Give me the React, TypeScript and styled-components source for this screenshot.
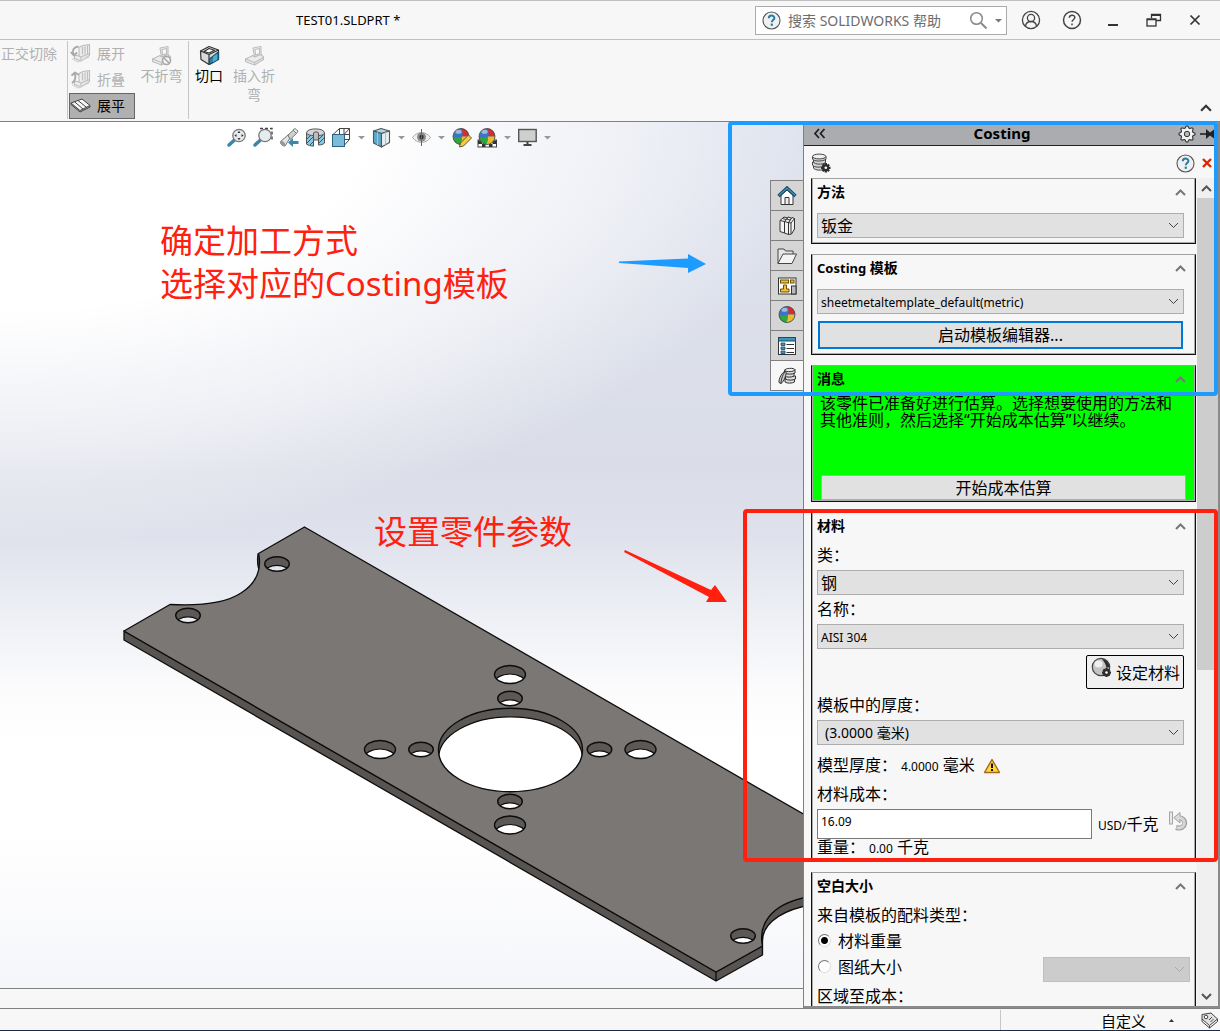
import React, { useState } from "react";
import styled, { createGlobalStyle, css } from "styled-components";

const sans = `"Noto Sans", "Noto Sans CJK SC", sans-serif`;

const GlobalStyle = createGlobalStyle`
  * { box-sizing: border-box; }
  html, body { margin: 0; }
  body { font-family: ${sans}; font-size: 16px; color: #000; background: #f7f7f7; }
  button, input, select { font-family: inherit; margin: 0; }
  svg { display: block; flex: none; }
`;

/* ---------- layout ---------- */

const Page = styled.div`
  position: relative;
  display: flex;
  flex-direction: column;
  height: 100vh;
  min-width: 900px;
  overflow: hidden;
  border-bottom: 1px solid #1d2a44;
`;

const TitleBar = styled.header`
  display: flex;
  align-items: center;
  height: 40px;
  flex: none;
  border-top: 1px solid #c0c0c0;
  border-bottom: 1px solid #c0c0c0;
  padding: 0 5px 0 296px;
`;

const DocTitle = styled.h1`
  margin: 0;
  flex: 1;
  font-size: 13px;
  font-weight: 400;
`;

const SearchBox = styled.label`
  display: flex;
  align-items: center;
  width: 252px;
  height: 29px;
  margin-right: 3px;
  padding: 0 4px 0 6px;
  gap: 7px;
  border: 1px solid #ababab;
  background: #fff;
`;

const SearchInput = styled.input`
  flex: 1;
  min-width: 0;
  border: 0;
  padding: 0;
  font-size: 14px;
  background: none;
  outline: none;
  &::placeholder { color: #6d6d6d; opacity: 1; }
`;

const PlainButton = styled.button`
  display: flex;
  align-items: center;
  justify-content: center;
  border: 0;
  padding: 0;
  background: none;
`;

const WindowButton = styled(PlainButton)`
  width: 41px;
  height: 36px;
`;

const Ribbon = styled.nav`
  display: flex;
  align-items: flex-start;
  height: 82px;
  flex: none;
  padding-top: 1px;
  border-bottom: 1px solid #808080;
`;

const RibbonGroup = styled.div`
  display: flex;
  height: 78px;
  border-right: 1px solid #c6c6c6;
  &:last-of-type { border-right: 0; }
`;

const RibbonStack = styled.div`
  display: flex;
  flex-direction: column;
  padding-left: 1px;
`;

const RibbonButton = styled.button<{ $pressed?: boolean }>`
  display: flex;
  align-items: center;
  gap: 6px;
  height: 26px;
  padding: 0 9px 2px 0;
  border: 1px solid ${(p) => (p.$pressed ? "#666" : "transparent")};
  background: ${(p) => (p.$pressed ? "#b0b0b0" : "none")};
  color: ${(p) => (p.$pressed ? "#000" : "#b0b0b0")};
  font-size: 14px;
`;

const RibbonTile = styled.button<{ $enabled?: boolean; $width: number }>`
  display: flex;
  flex-direction: column;
  align-items: center;
  width: ${(p) => p.$width}px;
  padding: 4px 0 0;
  border: 0;
  background: none;
  color: ${(p) => (p.$enabled ? "#000" : "#b0b0b0")};
  font-size: 14px;
  line-height: 19px;
`;

const RibbonCollapse = styled(PlainButton)`
  align-self: flex-end;
  margin-left: auto;
  width: 28px;
  height: 26px;
`;

const Main = styled.main`
  display: flex;
  flex: 1;
  min-height: 0;
`;

const ViewColumn = styled.section`
  display: flex;
  flex-direction: column;
  flex: 1;
  min-width: 0;
`;

const Viewport = styled.div`
  position: relative;
  flex: 1;
  overflow: hidden;
  background:
    radial-gradient(870px 450px at 0 0, #fff 0, #fff 42%, rgba(255, 255, 255, 0.5) 72%, rgba(255, 255, 255, 0) 94%),
    linear-gradient(#dfe3ee 0, #dadde8 40%, #dfe2ec 48%, #eff1f6 58%, #fcfcfd 66%, #fff 72%, #fff 82%, #f5f6fa 100%);
`;

const ViewFooter = styled.div`
  height: 20px;
  flex: none;
  border-top: 1px solid #808080;
`;

const HudBar = styled.div`
  position: relative;
  z-index: 1;
  display: flex;
  padding: 2px 0 0 224px;
`;

const HudButton = styled(PlainButton)<{ $menu?: boolean }>`
  width: ${(p) => (p.$menu ? 14 : 26)}px;
  height: 26px;
`;

const ModelDrawing = styled.svg`
  position: absolute;
  left: 0;
  top: 0;
`;

const TabStrip = styled.div`
  position: absolute;
  right: 0;
  top: 58px;
  width: 33px;
  border: 1px solid #808080;
  border-width: 1px 0 0 1px;
`;

const TabButton = styled(PlainButton)<{ $active?: boolean }>`
  width: 32px;
  height: 30px;
  background: ${(p) => (p.$active ? "#f7f7f7" : "#d5d5d5")};
  border-bottom: 1px solid #808080;
`;

/* ---------- task pane ---------- */

const TaskPane = styled.aside`
  display: flex;
  flex-direction: column;
  flex: none;
  width: 417px;
  border-left: 1px solid #808080;
  border-right: 2px solid #8a8a8a;
`;

const PaneHeader = styled.header`
  display: flex;
  align-items: center;
  height: 24px;
  flex: none;
  padding: 0 1px 0 9px;
  gap: 3px;
  background: #abacaf;
  border-bottom: 1px solid #222;
`;

const PaneTitle = styled.h2`
  flex: 1;
  margin: 0;
  text-align: center;
  font-size: 15px;
  font-weight: 700;
  line-height: 22px;
  padding-bottom: 1px;
`;

const PaneTools = styled.div`
  display: flex;
  align-items: center;
  height: 32px;
  flex: none;
  padding: 2px 5px 0 7px;
  gap: 6px;
`;

const Spacer = styled.span`
  flex: 1;
`;

const PaneBody = styled.div`
  display: flex;
  flex: 1;
  min-height: 0;
  border-bottom: 2px solid #8a8a8a;
`;

const Groups = styled.div`
  flex: 1;
  min-width: 0;
  display: flex;
  flex-direction: column;
  gap: 10px;
  padding: 0 1px 0 7px;
  overflow-y: auto;
  scrollbar-width: none;
`;

const ScrollTrack = styled.div`
  display: flex;
  flex-direction: column;
  width: 21px;
  flex: none;
  background: #f0f0f0;
`;

const ScrollThumb = styled.div`
  height: 57%;
  background: #cdcdcd;
`;

const ScrollButton = styled(PlainButton)`
  height: 20px;
  flex: none;
  padding-right: 3px;
`;

const GroupBox = styled.section<{ $alert?: boolean }>`
  flex: none;
  border: 1px solid #111;
  border-top-color: #a0a0a0;
  box-shadow: inset 1px 0 #aaa, inset -1px -1px #aaa;
  padding: 0 11px ${(p) => (p.$alert ? 1 : 5)}px 5px;
  background: ${(p) => (p.$alert ? "#00ff00" : "#f7f7f7")};
`;

const GroupHead = styled.div<{ $loose?: boolean }>`
  display: flex;
  align-items: center;
  justify-content: space-between;
  height: 28px;
  padding-bottom: 2px;
  margin: 0 -2px ${(p) => (p.$loose ? 6 : 0)}px 0;
`;

const GroupTitle = styled.h3`
  margin: 0;
  font-size: 14px;
  font-weight: 700;
  line-height: 26px;
`;

const TitleLatin = styled.span`
  font-size: 13px;
`;

const Latin = styled.span`
  font-size: 12px;
`;

const FieldLabel = styled.label`
  display: block;
  height: 29px;
  line-height: 29px;
`;

const SelectWrap = styled.div<{ $muted?: boolean }>`
  display: grid;
  align-items: center;
  width: ${(p) => (p.$muted ? "147px" : "100%")};
  & > * { grid-area: 1 / 1; }
  & > svg { justify-self: end; margin-right: 5px; pointer-events: none; }
`;

const SelectBox = styled.select<{ $size: "small" | "medium" | "large" }>`
  appearance: none;
  width: 100%;
  height: 25px;
  padding: 0 24px 0 3px;
  border: 1px solid #adadad;
  border-radius: 0;
  background: #e1e1e1;
  color: #000;
  font-size: ${(p) => ({ small: 12, medium: 14, large: 16 })[p.$size]}px;
  ${(p) => p.$size === "medium" && css`padding-left: 7px;`}
  ${(p) => p.$size === "small" && css`padding-top: 2px;`}
  &:disabled { background: #ccc; border-color: #bfbfbf; opacity: 1; }
`;

const WideButton = styled.button<{ $focus?: boolean }>`
  display: block;
  width: calc(100% - 2px);
  padding: 0;
  font-size: 16px;
  line-height: 20px;
  background: #e1e1e1;
  ${(p) =>
    p.$focus
      ? css`height: 28px; margin: 7px 1px 0; border: 2px solid #0078d7;`
      : css`height: 25px; margin-left: 4px; border: 1px solid #adadad;`}
`;

const Message = styled.p`
  margin: 0 -1px 0 0;
  min-height: 81px;
  padding: 1px 0 0 3px;
  line-height: 17px;
`;

const MaterialRow = styled.div`
  display: flex;
  justify-content: flex-end;
  padding: 6px 0 2px;
`;

const MaterialButton = styled.button`
  display: flex;
  align-items: center;
  gap: 4px;
  height: 34px;
  padding: 0 3px 0 4px;
  border: 1px solid #000;
  border-radius: 2px;
  background: #f0f0f0;
  font-size: 16px;
  & > svg { align-self: flex-start; margin-top: 1px; }
`;

const ValueRow = styled.div<{ $spaced?: boolean }>`
  display: flex;
  align-items: center;
  gap: 4px;
  height: ${(p) => (p.$spaced ? 35 : 17)}px;
  padding-top: ${(p) => (p.$spaced ? 6 : 0)}px;
  line-height: 17px;
  & output { margin-right: 4px; }
`;

const CostRow = styled.div`
  display: flex;
  align-items: center;
  gap: 6px;
  margin-right: -4px;
`;

const CostInput = styled.input`
  width: 275px;
  height: 30px;
  padding: 0 3px 6px;
  border: 1px solid #7a7a7a;
  background: #fff;
  font-size: 12px;
`;

const Unit = styled.span`
  flex: 1;
  padding-bottom: 3px;
  white-space: nowrap;
`;

const ResetButton = styled(PlainButton)`
  padding-bottom: 6px;
`;

const RadioRow = styled.div<{ $tall?: boolean }>`
  display: flex;
  align-items: flex-end;
  justify-content: space-between;
  height: ${(p) => (p.$tall ? 32 : 20)}px;
  margin-right: -6px;
`;

const RadioLabel = styled.label<{ $tall?: boolean }>`
  display: flex;
  align-items: center;
  gap: 7px;
  height: ${(p) => (p.$tall ? 32 : 20)}px;
`;

const Radio = styled.input`
  appearance: none;
  width: 13px;
  height: 13px;
  margin: 0 0 0 1px;
  border: 1px solid;
  border-color: #777 #ddd #ddd #777;
  border-radius: 50%;
  background: #fff;
  &:checked { background: radial-gradient(circle, #000 0 3px, #fff 4px); }
`;

const StatusBar = styled.footer`
  display: flex;
  justify-content: flex-end;
  height: 22px;
  flex: none;
  border-top: 1px solid #808080;
`;

const StatusCell = styled.div`
  display: flex;
  align-items: center;
  justify-content: flex-end;
  gap: 25px;
  width: 220px;
  margin-top: 1px;
  padding: 1px 1px 0 0;
  border-left: 1px solid #c6c6c6;
`;

const UnitMenu = styled(PlainButton)`
  gap: 22px;
  font-size: 15px;
`;

/* ---------- markup drawn over the window ---------- */

const Callout = styled.div<{ $color: string; $top: number; $width: number; $height: number }>`
  position: absolute;
  right: 2px;
  top: ${(p) => p.$top}px;
  width: ${(p) => p.$width}px;
  height: ${(p) => p.$height}px;
  border: 4px solid ${(p) => p.$color};
  border-radius: 4px;
  pointer-events: none;
`;

const Note = styled.p<{ $left: number; $top: number }>`
  position: absolute;
  left: ${(p) => p.$left}px;
  top: ${(p) => p.$top}px;
  margin: 0;
  color: #ff2010;
  font-size: 33px;
  font-weight: 400;
  line-height: 43px;
  white-space: nowrap;
`;

/* ---------- icons ---------- */

const Chevron = ({ up, color = "#555", size = 11, weight = 1 }: { up?: boolean; color?: string; size?: number; weight?: number }) => (
  <svg width={size} height={size} viewBox="0 0 11 11" fill="none" stroke={color} strokeWidth={weight}>
    <path d={up ? "M1 8 5.500 3.500 10 8" : "M1 3 5.500 7.500 10 3"} />
  </svg>
);

const Caret = ({ up, color = "#777" }: { up?: boolean; color?: string }) => (
  <svg width="7" height="5" viewBox="0 0 7 5">
    <path d={up ? "M1 4h5L3.500 1z" : "M0 1h7L3.500 4.500z"} fill={color} />
  </svg>
);

const HelpBadge = () => (
  <svg width="19" height="19" viewBox="0 0 19 19">
    <circle cx="9.500" cy="9.500" r="8.500" fill="#eef0f2" stroke="#555" strokeWidth="1.100" />
    <path d="M6.800 7.300c0-3.600 5.600-3.500 5.600-.3 0 2-2.600 2.200-2.600 4.200" fill="none" stroke="#2a7ca3" strokeWidth="2" />
    <rect x="8.700" y="12.600" width="2.200" height="2.200" fill="#2a7ca3" />
  </svg>
);

const Gear = ({ x, y, r, fill = "#2d2d2d", hole = "#fff" }: { x: number; y: number; r: number; fill?: string; hole?: string }) => (
  <g transform={`translate(${x} ${y})`}>
    <g stroke={fill} strokeWidth={r * 0.5}>
      <path d={`M0 ${-r}V${r}M${-r} 0H${r}M${-r * 0.7} ${-r * 0.7}L${r * 0.7} ${r * 0.7}M${r * 0.7} ${-r * 0.7}L${-r * 0.7} ${r * 0.7}`} />
    </g>
    <circle r={r * 0.72} fill={fill} />
    <circle r={r * 0.28} fill={hole} />
  </g>
);

const CoinStack = () => (
  <svg width="20" height="20" viewBox="0 0 20 20">
    <g fill="#d4d4d4" stroke="#444" strokeWidth="1">
      <path d="M2.500 12.500V15c1 2.500 9 3 12 .5v-3z" />
      <path d="M1.500 9V12c1 2.500 9 3 12.500.5V9z" />
      <path d="M2.500 6V9c1 2.500 9 3 12 .5V6z" />
      <path d="M1.500 3.500V6c1 2.500 9.500 2.800 13.500 .3V3.500z" />
      <ellipse cx="8.200" cy="3.500" rx="6.700" ry="2.400" fill="#f0f0f0" />
    </g>
    <Gear x={14.800} y={14.800} r={4.700} />
  </svg>
);

const GearOutline = () => {
  const teeth = Array.from({ length: 32 }, (_, i) => {
    const radius = i % 4 < 2 ? 8 : 6.200;
    const angle = ((i - 0.500) * Math.PI) / 16;
    return `${(9 + radius * Math.cos(angle)).toFixed(2)},${(9 + radius * Math.sin(angle)).toFixed(2)}`;
  });
  return (
    <svg width="18" height="18" viewBox="0 0 18 18">
      <polygon points={teeth.join(" ")} fill="#f2f2f2" stroke="#333" strokeWidth="1.100" strokeLinejoin="round" />
      <circle cx="9" cy="9" r="2.700" fill="#bbb" stroke="#333" />
    </svg>
  );
};

const PinIcon = () => (
  <svg width="18" height="12" viewBox="0 0 18 12">
    <path d="M1 6h7" stroke="#222" strokeWidth="1.600" />
    <path d="M7 1v10l4-3.500 4 3V1.500l-4 3z" fill="#222" />
  </svg>
);

const DoubleChevron = () => (
  <svg width="13" height="11" viewBox="0 0 13 11" fill="none" stroke="#222" strokeWidth="1.800">
    <path d="M6 1 2 5.500 6 10M11.500 1l-4 4.500 4 4.500" />
  </svg>
);

const BendPart = ({ mark }: { mark?: "arc" | "arrow" | "ban" }) => (
  <svg width="21" height="21" viewBox="0 0 21 21" fill="#ececec" stroke="#bdbdbd" strokeWidth="1.100" strokeLinejoin="round">
    {mark === "arc" || mark === "arrow" ? (
      <g>
        <path d="M9 4.500 13 2.500l6.500-1v11L11 18 4.500 15.500V12L9 13z" />
        <path d="M12.500 4v7.500M15 3.200v8M17.500 2.500v8.500M9 13l2 1 8.500-3.500M11 14v4" fill="none" />
        <path d="M2 15.500 8 19l11-5" fill="none" stroke="#d2d2d2" />
        {mark === "arc" ? (
          <path d="M8.500 3.500C3.500 4 2 7 3.500 11.500M.800 9l3 3.500L7 9.500" fill="none" stroke="#a8a8a8" strokeWidth="1.900" />
        ) : (
          <path d="M2 14c3-2 4-5 3-9M1.500 6.500 5 3.500l4 2.500" fill="none" stroke="#a8a8a8" strokeWidth="1.900" />
        )}
      </g>
    ) : (
      <g>
        <path d="M9 3 17 1.500V9.500L10.500 12z" />
        <path d="m11 4.500 4.500-1v5L11.500 10z" fill="#fafafa" />
        <path d="M1.500 14 9 10.500l1.500 1.500 6.500-2.500 2.500 2.500v2.500L10.500 20l-9-3.500z" />
        <path d="m1.500 14 9 3.500 9-5M10.500 17.500V20" fill="none" />
      </g>
    )}
    {mark === "ban" && (
      <g stroke="#a8a8a8" fill="#f4f4f4">
        <circle cx="15.500" cy="15.500" r="4" strokeWidth="1.600" />
        <path d="m13 13 5 5" strokeWidth="1.600" />
      </g>
    )}
  </svg>
);

const FlattenIcon = () => (
  <svg width="21" height="16" viewBox="0 0 21 16" fill="#f7f7f7" stroke="#444" strokeWidth="1">
    <path d="M1 6 12 2l8 6.500-10 5z" />
    <path d="m4.500 4.800 8.700 7.400M8 3.500l8.700 7M1 6v1.500l9 7.500 10-5V8.500" fill="none" />
  </svg>
);

const RipIcon = () => (
  <svg width="21" height="21" viewBox="0 0 21 21" stroke="#333" strokeWidth="1.200" strokeLinejoin="round">
    <path d="M1.500 6 10 1.500 19.500 5v9L10 19.500l-8-5z" fill="#d9d9d9" />
    <path d="M1.500 6 10 9.500 19.500 5M10 9.500v10" fill="none" />
    <path d="M5 6.500 10 3.500l5.500 1.800L10 8z" fill="#fff" />
    <path d="M10.500 18.500V14L19.500 7v7.500l-8 4.500z" fill="#2d83ad" stroke="#15506e" />
    <path d="M14 11.500 18 9v6l-4 2z" fill="#57a9cf" stroke="none" />
  </svg>
);

const Lens = ({ area }: { area?: boolean }) => (
  <svg width="21" height="21" viewBox="0 0 21 21">
    {area && <path d="M7 1.500h12v12" fill="none" stroke="#444" strokeWidth="1.400" strokeDasharray="3 2" />}
    <path d="m2 18 6-5.500" stroke="#3b87ab" strokeWidth="3.500" strokeLinecap="round" />
    <circle cx="12" cy="8.500" r="6.200" fill="#e6ebee" stroke="#777" strokeWidth="1.300" />
    {!area && <path d="M12 3.800 13.500 6h-3zM12 13.200l1.500-2.200h-3zM7.300 8.500 9.500 7v3zM16.700 8.500 14.500 7v3z" fill="#333" />}
  </svg>
);

const PreviousView = () => (
  <svg width="21" height="21" viewBox="0 0 21 21" strokeLinejoin="round">
    <path d="M1.500 14.500 9 8l2 3-5 8c-2 .5-5-2-4.500-4.500z" fill="#e4e4e4" stroke="#777" />
    <path d="M9 8l5.500-5 3 3.500L11 12.500z" fill="#d0d0d0" stroke="#777" />
    <path d="M14 3l2-1.500 3 2.500-1.500 2.500z" fill="#eee" stroke="#777" />
    <ellipse cx="3.800" cy="16.500" rx="1.800" ry="2.800" transform="rotate(-45 3.800 16.500)" fill="#999" />
    <path d="M9 15.500l5-4.500v3h5.500v3H14v3z" fill="#3b87ab" />
  </svg>
);

const SectionView = () => (
  <svg width="21" height="21" viewBox="0 0 21 21" stroke="#555" strokeLinejoin="round">
    <path d="M1.500 6c0-5.500 18-5.500 18 0v10l-5 1.500V9h-6v10l-7-2z" fill="#d5d5d5" />
    <path d="M8.500 6c0-1.500 5-1.500 5 0v7h-5z" fill="#bdbdbd" />
    <path d="M1.500 6.500c2 1.500 4 2 7 2V19c-3 0-5-.5-7-2z" fill="#8cc6de" />
    <path d="M13.500 8.500c2.500 0 4.500-.5 6-2V16c-1.500 1.500-3.500 2-6 2z" fill="#8cc6de" />
    <path d="m2 12 4-4M2 16l6-6M5 18l3.500-3.500M14 12l4-4M14 16l5.500-5.500" stroke="#1f5f80" />
  </svg>
);

const OrientationCube = () => (
  <svg width="21" height="21" viewBox="0 0 21 21" stroke="#444">
    <path d="M2 7.500 8.500 1.500h10v11L13 18.500M8.500 1.500v6M13 7.500l5.500-6M13 2v12M8.500 12.500h10M13 7.500h5" fill="none" />
    <rect x="1.500" y="7.500" width="12" height="12" fill="#7dbcd8" stroke="#2d6380" />
  </svg>
);

const DisplayCube = () => (
  <svg width="21" height="21" viewBox="0 0 21 21" stroke="#555" strokeWidth="1.100" strokeLinejoin="round">
    <path d="M2.500 4 10 1.500 18.500 4 10.500 6.500z" fill="#a9d6ea" />
    <path d="M2.500 4v12l8 4V6.500z" fill="#5ea7c8" />
    <path d="M10.500 6.500V20l8-4.500V4z" fill="#e8eef1" />
    <path d="M6.500 5.200V18M14.500 5.200v12.500" stroke="#9cc" />
  </svg>
);

const EyeIcon = () => (
  <svg width="21" height="21" viewBox="0 0 21 21">
    <path d="M1.500 10.500C6 4 15 4 19.500 10.500 15 17 6 17 1.500 10.500z" fill="#eee" stroke="#aaa" />
    <circle cx="10.500" cy="10" r="4.500" fill="#8b8b8b" />
    <circle cx="10.500" cy="10" r="2.200" fill="#333" />
    <path d="M10.500 2v17" stroke="#666" />
  </svg>
);

const ColourBall = ({ extra }: { extra?: "pencil" | "scene" }) => (
  <svg width="21" height="21" viewBox="0 0 21 21">
    {extra === "scene" && (
      <g>
        <rect x="1" y="13" width="18.500" height="7" fill="#fff" stroke="#444" />
        <path d="M1 13.500h4V17H1zM5 17h3.500v3H5zM8.500 14H12v3H8.500zM12 17h3.500v3H12zM15.500 13.500h4V17h-4z" fill="#333" />
      </g>
    )}
    <circle cx="10" cy="9.500" r="8" fill="#3c74c9" />
    <path d="M10 1.500a8 8 0 0 1 8 8H11c1.500-3 .5-6-1-8z" fill="#d92c2c" />
    <path d="M2 10.500c3 1 6 0 9-1 0 4-.5 6-2 8-3.500 0-6.500-3-7-7z" fill="#2fa73a" />
    <path d="M11 9.500h7a8 8 0 0 1-9 8c1.500-2 2-4 2-8z" fill="#e9bd33" />
    <ellipse cx="7.500" cy="4.800" rx="3.200" ry="2" fill="#fff" opacity="0.500" />
    <circle cx="10" cy="9.500" r="8" fill="none" stroke="#444" strokeWidth="0.800" />
    {extra === "pencil" && <path d="M8.500 20l1-4 8-8 3 3-8 8z" fill="#f2cb4d" stroke="#5c4a1d" strokeWidth="0.900" />}
  </svg>
);

const Monitor = () => (
  <svg width="21" height="21" viewBox="0 0 21 21">
    <rect x="1.700" y="2.500" width="17.500" height="12" fill="#cfcfcf" stroke="#555" strokeWidth="1.400" />
    <path d="M10.500 15v3M6.500 18h8" stroke="#444" strokeWidth="2" />
  </svg>
);

const HomeIcon = () => (
  <svg width="20" height="20" viewBox="0 0 20 20">
    <path d="M4 9v9.500h12V9l-6-5z" fill="#fff" stroke="#333" />
    <path d="M1.500 10 10 2l8.500 8" fill="none" stroke="#123f57" strokeWidth="3.200" />
    <path d="M1.800 9.600 10 2.200l8.200 7.400" fill="none" stroke="#3f94bb" strokeWidth="1.300" />
    <path d="M8 18v-6.500h4V18" fill="#eee" stroke="#333" />
  </svg>
);

const LibraryIcon = () => (
  <svg width="20" height="20" viewBox="0 0 20 20" fill="#f2f2f2" stroke="#333" strokeLinejoin="round">
    <path d="M11.500 6.500 15 1.500l2.500 1V13l-3 5-3 .5z" />
    <path d="M7.500 5 11 1l3.500 1-3 4.500v12l-4-1.500z" />
    <path d="M3 4.500 7 1l3.500 1L7.500 5.500V17L3 15.500z" />
    <path d="m3 4.500 4.500 1 3.500 1 3 .5 3.500-4.500M5.500 2.500 9 3.500M9.500 3l3.500 1M14 7v11" fill="none" />
  </svg>
);

const FolderIcon = () => (
  <svg width="22" height="20" viewBox="0 0 22 20" stroke="#444" strokeLinejoin="round">
    <path d="M2 17.500V3h6l1.500 2H17v3.500" fill="#e6e6e6" />
    <path d="M2 17.500 7 8h13.500l-4.500 9.500z" fill="#f4f4f4" />
  </svg>
);

const PaletteIcon = () => (
  <svg width="20" height="20" viewBox="0 0 20 20" stroke="#333">
    <rect x="1.500" y="2" width="17.500" height="16" fill="#fff" />
    <g fill="#f2c230" stroke="#6b4e00">
      <rect x="3.500" y="4" width="8" height="3" />
      <rect x="13.500" y="4" width="3.500" height="3" />
      <path d="M6.500 9h3v4h2.500v3H3.500v-3h3z" />
    </g>
    <rect x="14.500" y="10" width="4.500" height="8" fill="#bbb" />
  </svg>
);

const PropertiesIcon = () => (
  <svg width="20" height="20" viewBox="0 0 20 20">
    <rect x="1.500" y="2" width="17" height="16.500" fill="#fff" stroke="#333" />
    <rect x="1.500" y="1.500" width="17" height="3.500" fill="#3f94bb" stroke="#1d4a60" />
    <path d="M4 7h4v2.500H4zM4 11h4v2.500H4zM4 15h4v2.500H4z" fill="#3f94bb" stroke="#1d4a60" strokeWidth="0.800" />
    <path d="M9.500 8.500H17M9.500 12.500H17M9.500 16.500H17" stroke="#333" />
  </svg>
);

const CostingIcon = () => (
  <svg width="20" height="20" viewBox="0 0 20 20" stroke="#333" fill="#dcdcdc" strokeLinejoin="round">
    <path d="M8 13v3c2 1.500 7 1.500 9.500 0v-3z" />
    <path d="M8.500 10v3c2 1.500 7 1.500 10 0v-3z" />
    <path d="M7.500 7v3c2 1.500 7 1.500 9.500 0V7z" />
    <path d="M7.500 4v3c2 1.500 8 1.500 10.500 0V3.500z" />
    <path d="M7.500 4.500C8 2 17 1.500 18 3.800c-1 2-8.500 2.500-10.500.7z" fill="#f1f1f1" />
    <path d="M2 16.500C1.500 13 5 6 8.500 5c2 1.500-1.500 11-4.500 12.500z" fill="#c9c9c9" />
    <path d="M4 17.500C4 13 6.500 7 8.500 5" fill="none" />
  </svg>
);

const MaterialBall = () => (
  <svg width="21" height="21" viewBox="0 0 21 21">
    <circle cx="10" cy="10" r="8.700" fill="#c4c4c4" stroke="#444" strokeWidth="1.200" />
    <ellipse cx="7.500" cy="7" rx="4" ry="3.500" fill="#f0f0f0" />
    <path d="M11 2c4 .5 7 3.500 7.500 8l-3 1C15 7 13 4.500 11 2z" fill="#2c2c2c" />
    <Gear x={15.500} y={15.500} r={4.500} />
  </svg>
);

const WarningIcon = () => (
  <svg width="18" height="16" viewBox="0 0 18 16">
    <path d="M9 1.500 16.500 14.500h-15z" fill="#ffd83a" stroke="#a8651c" strokeWidth="1.400" strokeLinejoin="round" />
    <path d="M9 5.500v4.500M9 11v2" stroke="#111" strokeWidth="2" />
  </svg>
);

const ResetIcon = () => (
  <svg width="20" height="20" viewBox="0 0 20 20">
    <rect x="1.500" y="1" width="3" height="12" fill="#e8e8e8" stroke="#a5a5a5" />
    <path d="M8 16.500c11 3 11-10 3-9.700" fill="none" stroke="#a0a0a0" strokeWidth="5" />
    <path d="M12 1.500v10.500L5.800 6.700z" fill="#dadada" stroke="#a0a0a0" />
    <path d="M8.500 16.600c10 2.400 10-10 2.500-9.800" fill="none" stroke="#d6d6d6" strokeWidth="3" />
  </svg>
);

const TagIcon = () => (
  <svg width="19" height="17" viewBox="0 0 19 17" fill="#e2e2e2" stroke="#444" strokeLinejoin="round">
    <path d="M2 2.500 11 1l6.500 6-8 6.500L2 7z" />
    <path d="M2 7v2.500L9.500 16l8-6.500V7M9.500 13.500V16" fill="none" />
    <circle cx="6" cy="5" r="1.800" fill="#fff" />
    <path d="m9 8 3-3M10.500 10l3-3" />
  </svg>
);

/* ---------- part model ---------- */

type HoleProps = { id: string; x: number; y: number; rx: number; ry: number; back?: string };

const Hole = ({ id, x, y, rx, ry, back = "#fff" }: HoleProps) => (
  <g>
    <clipPath id={id}>
      <ellipse cx={x} cy={y} rx={rx} ry={ry} />
    </clipPath>
    <ellipse cx={x} cy={y} rx={rx} ry={ry} fill="#5b5855" />
    <ellipse cx={x} cy={y + 8.500} rx={rx} ry={ry} fill={back} stroke="#0d0d0d" strokeWidth="1.200" clipPath={`url(#${id})`} />
    <ellipse cx={x} cy={y} rx={rx} ry={ry} fill="none" stroke="#0d0d0d" strokeWidth="1.400" />
  </g>
);

const smallHoles: [number, number, string?][] = [
  [277, 564, "#e2e5ee"],
  [188, 615.500, "#eceef4"],
  [421, 749.500],
  [510, 698.500],
  [599.500, 749.500],
  [510, 801.500],
  [743, 936],
];
const boltHoles: [number, number][] = [
  [380, 749.500],
  [510, 674.500],
  [640.500, 749.500],
  [510, 825],
];

const PlateModel = () => (
  <ModelDrawing width="803" height="866" viewBox="0 122 803 866" aria-label="Sheet metal plate">
    <g stroke="#0d0d0d" strokeWidth="1.300" strokeLinejoin="round">
      <path d="M124 631 716 972 762.500 946V955L716 981 124 640z" fill="#575451" />
      <path d="M716 972V981" />
      <path d="M762.500 946C758 925 770 905 805 897.500V906C775 913 762 927 762.500 942z" fill="#575451" />
      <path d="M258 554C257 561 258 568 260 572L262 560z" fill="#575451" />
      <path
        d="M304.500 527 805 815V897.500C770 905 758 925 762.500 946L716 972 124 631 170 604.500C200 606 226 603 241 593C257 583 262 568 258.500 553.500z"
        fill="#7b7774"
      />
    </g>
    {smallHoles.map(([x, y, back], i) => (
      <Hole key={i} id={`small${i}`} x={x} y={y} rx={12.300} ry={7.200} back={back} />
    ))}
    {boltHoles.map(([x, y], i) => (
      <Hole key={i} id={`bolt${i}`} x={x} y={y} rx={15.500} ry={9} />
    ))}
    <Hole id="bore" x={510.500} y={750} rx={72} ry={41.700} />
    <path d="M619 261.500 688 258.500V254L706 264 688 273V268L619 263z" fill="#1e9bff" />
    <path d="M625 550 711 590 715 585 727 602 706 602 709 597 624 552z" fill="#ff2010" />
  </ModelDrawing>
);

/* ---------- composed controls ---------- */

type DropDownProps = { id: string; options: string[]; size?: "small" | "medium" | "large"; disabled?: boolean; label?: string };

const DropDown = ({ id, options, size = "large", disabled, label }: DropDownProps) => (
  <SelectWrap $muted={disabled}>
    <SelectBox id={id} $size={size} disabled={disabled} aria-label={label}>
      {options.map((o) => (
        <option key={o}>{o}</option>
      ))}
    </SelectBox>
    <Chevron color={disabled ? "#aaa" : "#444"} />
  </SelectWrap>
);

type GroupProps = { title: React.ReactNode; loose?: boolean; alert?: boolean; children: React.ReactNode };

const Group = ({ title, loose, alert, children }: GroupProps) => (
  <GroupBox $alert={alert}>
    <GroupHead $loose={loose}>
      <GroupTitle>{title}</GroupTitle>
      <PlainButton aria-label="Collapse">
        <Chevron up color="#777" weight={2} />
      </PlainButton>
    </GroupHead>
    {children}
  </GroupBox>
);

const hudItems: { name: string; icon: React.ReactNode; menu?: boolean }[] = [
  { name: "Zoom to Fit", icon: <Lens /> },
  { name: "Zoom to Area", icon: <Lens area /> },
  { name: "Previous View", icon: <PreviousView /> },
  { name: "Section View", icon: <SectionView /> },
  { name: "View Orientation", icon: <OrientationCube />, menu: true },
  { name: "Display Style", icon: <DisplayCube />, menu: true },
  { name: "Hide/Show Items", icon: <EyeIcon />, menu: true },
  { name: "Edit Appearance", icon: <ColourBall extra="pencil" /> },
  { name: "Apply Scene", icon: <ColourBall extra="scene" />, menu: true },
  { name: "View Settings", icon: <Monitor />, menu: true },
];

const tabs = [
  { name: "Resources", icon: <HomeIcon /> },
  { name: "Design Library", icon: <LibraryIcon /> },
  { name: "File Explorer", icon: <FolderIcon /> },
  { name: "View Palette", icon: <PaletteIcon /> },
  { name: "Appearances", icon: <ColourBall /> },
  { name: "Custom Properties", icon: <PropertiesIcon /> },
  { name: "Costing", icon: <CostingIcon /> },
];

export default function App() {
  const [stock, setStock] = useState("weight");
  const [cost, setCost] = useState("16.09");

  return (
    <Page>
      <GlobalStyle />
      <TitleBar>
        <DocTitle>TEST01.SLDPRT *</DocTitle>
        <SearchBox>
          <HelpBadge />
          <SearchInput placeholder="搜索 SOLIDWORKS 帮助" aria-label="搜索" />
          <svg width="19" height="19" viewBox="0 0 19 19" fill="none" stroke="#888" strokeWidth="1.500">
            <circle cx="7.500" cy="7.500" r="5.800" />
            <path d="m12 12 5.500 5.500" strokeWidth="2" />
          </svg>
          <Caret />
        </SearchBox>
        <WindowButton aria-label="User">
          <svg width="20" height="20" viewBox="0 0 20 20" fill="none" stroke="#444" strokeWidth="1.300">
            <circle cx="10" cy="10" r="8.600" />
            <circle cx="10" cy="8" r="3.600" />
            <path d="M4.500 16c.5-3 2.500-4.500 5.500-4.500s5 1.500 5.500 4.500" />
          </svg>
        </WindowButton>
        <WindowButton aria-label="Help">
          <svg width="20" height="20" viewBox="0 0 20 20" fill="none" stroke="#444" strokeWidth="1.500">
            <circle cx="10" cy="10" r="8.500" />
            <path d="M7.300 7.800c0-3.500 5.500-3.400 5.500-.3 0 2-2.700 2-2.700 4.300M10 13.500v1.800" />
          </svg>
        </WindowButton>
        <WindowButton aria-label="Minimize">
          <svg width="12" height="12" viewBox="0 0 12 12">
            <path d="M1 11h10" stroke="#333" strokeWidth="2" />
          </svg>
        </WindowButton>
        <WindowButton aria-label="Restore">
          <svg width="16" height="15" viewBox="0 0 16 15" fill="none" stroke="#333" strokeWidth="1.300">
            <path d="M5.500 5V1.500h9v6H10" />
            <rect x="1" y="6" width="9" height="7" />
            <path d="M5 2.300h10M1 6.500h9" />
          </svg>
        </WindowButton>
        <WindowButton aria-label="Close">
          <svg width="12" height="12" viewBox="0 0 12 12" stroke="#333" strokeWidth="1.700">
            <path d="m1.500 1.500 9 9M10.500 1.500l-9 9" />
          </svg>
        </WindowButton>
      </TitleBar>

      <Ribbon>
        <RibbonGroup>
          <RibbonButton>正交切除</RibbonButton>
        </RibbonGroup>
        <RibbonGroup>
          <RibbonStack>
            <RibbonButton><BendPart mark="arc" />展开</RibbonButton>
            <RibbonButton><BendPart mark="arrow" />折叠</RibbonButton>
            <RibbonButton $pressed><FlattenIcon />展平</RibbonButton>
          </RibbonStack>
          <RibbonTile $width={53}><BendPart mark="ban" />不折弯</RibbonTile>
        </RibbonGroup>
        <RibbonGroup>
          <RibbonTile $width={40} $enabled><RipIcon />切口</RibbonTile>
          <RibbonTile $width={50}><BendPart />插入折<br />弯</RibbonTile>
        </RibbonGroup>
        <RibbonCollapse aria-label="Collapse ribbon">
          <Chevron up color="#333" weight={2} size={12} />
        </RibbonCollapse>
      </Ribbon>

      <Main>
        <ViewColumn>
          <Viewport>
            <PlateModel />
            <HudBar>
              {hudItems.map((item) => (
                <React.Fragment key={item.name}>
                  <HudButton aria-label={item.name}>{item.icon}</HudButton>
                  {item.menu && (
                    <HudButton $menu aria-label={`${item.name} menu`}><Caret color="#999" /></HudButton>
                  )}
                </React.Fragment>
              ))}
            </HudBar>
            <Note $left={160} $top={97}>确定加工方式<br />选择对应的Costing模板</Note>
            <Note $left={374} $top={388}>设置零件参数</Note>
            <TabStrip>
              {tabs.map((tab) => (
                <TabButton key={tab.name} $active={tab.name === "Costing"} aria-label={tab.name}>{tab.icon}</TabButton>
              ))}
            </TabStrip>
          </Viewport>
          <ViewFooter />
        </ViewColumn>

        <TaskPane>
          <PaneHeader>
            <PlainButton aria-label="Collapse pane"><DoubleChevron /></PlainButton>
            <PaneTitle>Costing</PaneTitle>
            <PlainButton aria-label="Options"><GearOutline /></PlainButton>
            <PlainButton aria-label="Pin"><PinIcon /></PlainButton>
          </PaneHeader>
          <PaneTools>
            <PlainButton aria-label="Costing options"><CoinStack /></PlainButton>
            <Spacer />
            <PlainButton aria-label="Help"><HelpBadge /></PlainButton>
            <PlainButton aria-label="Close">
              <svg width="12" height="12" viewBox="0 0 12 12" stroke="#dc2600" strokeWidth="2.400">
                <path d="m2 2 8 8M10 2l-8 8" />
              </svg>
            </PlainButton>
          </PaneTools>
          <PaneBody>
            <Groups>
              <Group title="方法" loose>
                <DropDown id="method" options={["钣金"]} label="方法" />
              </Group>

              <Group title={<><TitleLatin>Costing</TitleLatin> 模板</>} loose>
                <DropDown id="template" size="small" options={["sheetmetaltemplate_default(metric)"]} label="Costing 模板" />
                <WideButton $focus>启动模板编辑器...</WideButton>
              </Group>

              <Group title="消息" alert>
                <Message>该零件已准备好进行估算。选择想要使用的方法和其他准则，然后选择“开始成本估算”以继续。</Message>
                <WideButton>开始成本估算</WideButton>
              </Group>

              <Group title="材料">
                <FieldLabel htmlFor="class">类：</FieldLabel>
                <DropDown id="class" options={["钢"]} />
                <FieldLabel htmlFor="name">名称：</FieldLabel>
                <DropDown id="name" size="small" options={["AISI 304"]} />
                <MaterialRow>
                  <MaterialButton><MaterialBall />设定材料</MaterialButton>
                </MaterialRow>
                <FieldLabel htmlFor="thickness">模板中的厚度：</FieldLabel>
                <DropDown id="thickness" size="medium" options={["(3.0000 毫米)"]} />
                <ValueRow $spaced>
                  <span>模型厚度：</span>
                  <output><Latin>4.0000</Latin> 毫米</output>
                  <WarningIcon />
                </ValueRow>
                <FieldLabel htmlFor="cost">材料成本：</FieldLabel>
                <CostRow>
                  <CostInput id="cost" value={cost} onChange={(e) => setCost(e.target.value)} />
                  <Unit><Latin>USD/</Latin>千克</Unit>
                  <ResetButton aria-label="Reset cost"><ResetIcon /></ResetButton>
                </CostRow>
                <ValueRow>
                  <span>重量：</span>
                  <output><Latin>0.00</Latin> 千克</output>
                </ValueRow>
              </Group>

              <Group title="空白大小">
                <FieldLabel as="div">来自模板的配料类型：</FieldLabel>
                <RadioRow>
                  <RadioLabel>
                    <Radio type="radio" name="stock" checked={stock === "weight"} onChange={() => setStock("weight")} />
                    材料重量
                  </RadioLabel>
                </RadioRow>
                <RadioRow $tall>
                  <RadioLabel $tall>
                    <Radio type="radio" name="stock" checked={stock === "sheet"} onChange={() => setStock("sheet")} />
                    图纸大小
                  </RadioLabel>
                  <DropDown id="sheet" options={[""]} disabled label="图纸大小" />
                </RadioRow>
                <FieldLabel as="div">区域至成本：</FieldLabel>
              </Group>
            </Groups>
            <ScrollTrack>
              <ScrollButton aria-label="Scroll up"><Chevron up weight={2} /></ScrollButton>
              <ScrollThumb />
              <Spacer />
              <ScrollButton aria-label="Scroll down"><Chevron weight={2} /></ScrollButton>
            </ScrollTrack>
          </PaneBody>
        </TaskPane>
      </Main>

      <StatusBar>
        <StatusCell>
          <UnitMenu>自定义<Caret up color="#333" /></UnitMenu>
          <TagIcon />
        </StatusCell>
      </StatusBar>

      <Callout $color="#1e9bff" $top={121} $width={490} $height={275} />
      <Callout $color="#ff2010" $top={509} $width={475} $height={353} />
    </Page>
  );
}
